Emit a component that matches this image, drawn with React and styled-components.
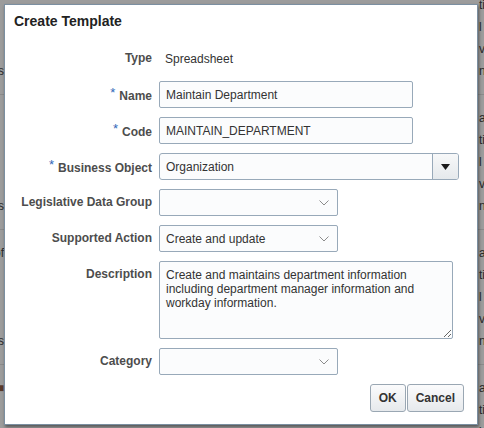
import React from "react";
import styled, { createGlobalStyle } from "styled-components";

const Global = createGlobalStyle`
  html, body { margin: 0; padding: 0; }
  body {
    width: 484px;
    height: 428px;
    overflow: hidden;
    background: #9c9c9c;
    font-family: "Liberation Sans", Arial, sans-serif;
  }
`;

const Page = styled.div`
  position: relative;
  width: 484px;
  height: 428px;
  display: flex;
  justify-content: space-between;
  overflow: hidden;
  background: #9c9c9c;
`;

const Strip = styled.div`
  width: ${(p) => p.$w}px;
  margin-top: -40px;
  overflow: hidden;
  display: flex;
  flex-direction: column;
`;

const Group = styled.div`
  padding: 12px 0;
  border-bottom: 1px solid #8b8b8b;
  display: flex;
  flex-direction: column;
  align-items: ${(p) => (p.$side === "left" ? "flex-end" : "flex-start")};
  padding-left: ${(p) => (p.$side === "left" ? 0 : 1)}px;
`;

const Line = styled.div`
  height: 22px;
  line-height: 22px;
  font-size: 12px;
  color: ${(p) => p.$color || "#2a2a2a"};
  white-space: nowrap;
`;

const Dialog = styled.div`
  position: absolute;
  left: 4px;
  top: 4px;
  width: 474px;
  height: 421px;
  box-sizing: border-box;
  background: #ffffff;
  border: 1px solid #7b8fa1;
  box-shadow: 1px 2px 3px rgba(0, 0, 0, 0.45);
  display: flex;
  flex-direction: column;
`;

const Header = styled.div`
  padding: 7px 0 0 9px;
`;

const Title = styled.h1`
  margin: 0;
  font-size: 14px;
  line-height: 18px;
  font-weight: bold;
  color: #222222;
`;

const Form = styled.div`
  margin-top: 15px;
  display: grid;
  grid-template-columns: 147px 1fr;
  column-gap: 7px;
  row-gap: 9px;
  align-items: center;
`;

const Label = styled.label`
  justify-self: end;
  align-self: ${(p) => (p.$top ? "start" : "center")};
  padding-top: ${(p) => (p.$top ? 6 : 0)}px;
  font-size: 12px;
  line-height: 15px;
  font-weight: bold;
  color: #4d4d4d;
  white-space: nowrap;
`;

const Req = styled.span`
  color: #2f68b8;
  font-weight: normal;
  font-size: 13px;
  vertical-align: 3px;
  margin-right: 4px;
`;

const Value = styled.div`
  height: 27px;
  display: flex;
  align-items: center;
  padding-left: 6px;
  font-size: 12px;
  color: #333333;
`;

const TextInput = styled.input`
  width: ${(p) => p.$w}px;
  height: 27px;
  box-sizing: border-box;
  border: 1px solid #98a9b9;
  border-radius: 2px;
  background: #fbfcfd;
  padding: 0 6px;
  font-family: "Liberation Sans", Arial, sans-serif;
  font-size: 12px;
  color: #333333;
  outline: none;
`;

const Combo = styled.div`
  width: 300px;
  height: 27px;
  box-sizing: border-box;
  display: flex;
  border: 1px solid #98a9b9;
  border-radius: 3px;
  background: #fbfcfd;
  overflow: hidden;
`;

const ComboText = styled.div`
  flex: 1;
  display: flex;
  align-items: center;
  padding: 0 6px;
  font-size: 12px;
  color: #333333;
`;

const ComboButton = styled.div`
  width: 26px;
  box-sizing: border-box;
  border-left: 1px solid #98a9b9;
  background: linear-gradient(#f7f8f9, #e5e9ec);
  display: flex;
  align-items: center;
  justify-content: center;
`;

const Choice = styled.div`
  width: 179px;
  height: 27px;
  box-sizing: border-box;
  display: flex;
  align-items: center;
  justify-content: space-between;
  border: 1px solid #98a9b9;
  border-radius: 2px;
  background: #fbfcfd;
  padding: 0 8px 0 6px;
  font-size: 12px;
  color: #333333;
`;

const TextArea = styled.textarea`
  width: 294px;
  height: 78px;
  box-sizing: border-box;
  border: 1px solid #98a9b9;
  border-radius: 2px;
  background: #fbfcfd;
  padding: 6px 6px;
  font-family: "Liberation Sans", Arial, sans-serif;
  font-size: 12px;
  line-height: 14px;
  color: #333333;
  outline: none;
  resize: both;
  display: block;
`;

const Footer = styled.div`
  display: flex;
  justify-content: flex-end;
  gap: 1px;
  padding-right: 13px;
  margin-top: 9px;
`;

const Button = styled.button`
  height: 28px;
  padding: 0 8px;
  border: 1px solid #9aa7b3;
  border-radius: 3px;
  background: linear-gradient(#fbfbfc, #e6e9ec);
  font-family: "Liberation Sans", Arial, sans-serif;
  font-size: 12px;
  font-weight: bold;
  color: #333333;
`;

const Chevron = () => (
  <svg width="10" height="6" viewBox="0 0 10 6">
    <polyline points="0.5,0.5 5,5 9.5,0.5" fill="none" stroke="#8c8c8c" strokeWidth="1" />
  </svg>
);

const Triangle = () => (
  <svg width="9" height="6" viewBox="0 0 9 6">
    <polygon points="0,0 9,0 4.5,6" fill="#1a1a1a" />
  </svg>
);

const rightWords = ["at", "tion", "l", "ve", "nt"];
const leftGroups = [
  ["", "", "", "", "es"],
  ["", "", "", "", "es"],
  ["of", "", "", "", "es"],
  ["■", "", "", "", ""],
];

export default function App() {
  return (
    <>
      <Global />
      <Page>
        <Strip $w={4}>
          {leftGroups.map((g, i) => (
            <Group key={i} $side="left">
              {g.map((w, j) => (
                <Line key={j} $color={w === "■" ? "#5a3a2a" : undefined}>
                  {w || "\u00a0"}
                </Line>
              ))}
            </Group>
          ))}
        </Strip>
        <Strip $w={6}>
          {[0, 1, 2, 3].map((i) => (
            <Group key={i} $side="right">
              {rightWords.map((w, j) => (
                <Line key={j}>{w}</Line>
              ))}
            </Group>
          ))}
        </Strip>

        <Dialog role="dialog">
          <Header>
            <Title>Create Template</Title>
          </Header>
          <Form>
            <Label>Type</Label>
            <Value>Spreadsheet</Value>

            <Label>
              <Req>*</Req>Name
            </Label>
            <TextInput $w={254} defaultValue="Maintain Department" />

            <Label>
              <Req>*</Req>Code
            </Label>
            <TextInput $w={254} defaultValue="MAINTAIN_DEPARTMENT" />

            <Label>
              <Req>*</Req>Business Object
            </Label>
            <Combo>
              <ComboText>Organization</ComboText>
              <ComboButton>
                <Triangle />
              </ComboButton>
            </Combo>

            <Label>Legislative Data Group</Label>
            <Choice>
              <span />
              <Chevron />
            </Choice>

            <Label>Supported Action</Label>
            <Choice>
              <span>Create and update</span>
              <Chevron />
            </Choice>

            <Label $top>Description</Label>
            <TextArea defaultValue="Create and maintains department information including department manager information and workday information." />

            <Label>Category</Label>
            <Choice>
              <span />
              <Chevron />
            </Choice>
          </Form>
          <Footer>
            <Button>OK</Button>
            <Button>Cancel</Button>
          </Footer>
        </Dialog>
      </Page>
    </>
  );
}
